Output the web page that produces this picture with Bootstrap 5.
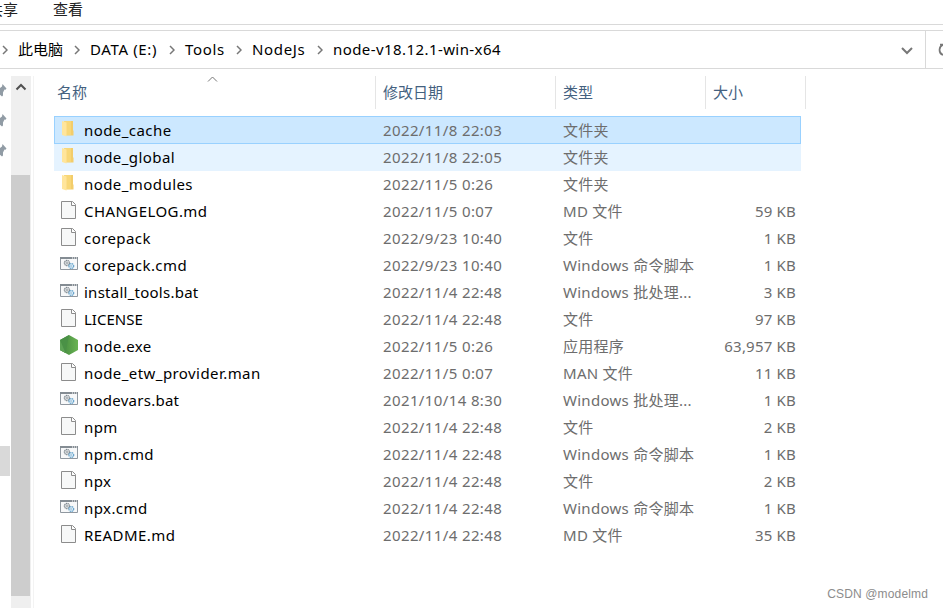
<!DOCTYPE html>
<html lang="zh-CN">
<head>
<meta charset="utf-8">
<title>node-v18.12.1-win-x64</title>
<link href="https://cdn.jsdelivr.net/npm/bootstrap@5.3.0/dist/css/bootstrap.min.css" rel="stylesheet">
<style>
body{width:943px;height:608px;font-family:"Noto Sans","Noto Sans CJK SC",sans-serif;font-size:15px;line-height:27px;color:#000;background:#fff}
svg{display:block;flex:none}
.ribbon{height:25px;border-bottom:1px solid #d9d9d9;color:#222}
.ribbon span{line-height:18px;white-space:nowrap}
.tab-share{width:53px;text-indent:-12px}
.address{height:39px;margin-top:5px;border:1px solid #d9d9d9;border-width:1px 0}
.crumb{white-space:nowrap;line-height:37px;margin-left:10px;letter-spacing:.65px}
.crumb-pc{width:56px;letter-spacing:0}.crumb-drive{width:79px}.crumb-tools{width:51px}.crumb-js{width:65px}
.crumb-last{letter-spacing:.42px}
.sep{width:6px;height:10px}
.sep-first{margin-left:2px}
.chevron{margin-right:10px}
.refresh{width:18px;padding-left:12px;border-left:1px solid #d9d9d9}
.main{height:532px;margin-top:7px}
.pins{width:11px;padding-top:8px}
.pins svg{width:7px;height:14px;margin-bottom:16px}
.pins-mark{width:10px;height:30px;background:#d9d9d9;margin-top:288px}
.track{width:20px;background:#efefef}
.track-arrow{margin-bottom:81px}
.thumb{width:19px;height:421px;background:#cdcdcd}
.divider{width:3px;border-right:1px solid #f3f3f3}
.files{width:752px;margin-left:20px}
.heads{height:33px;color:#44617f;margin-bottom:8px}
.heads>div{border-right:1px solid #e5e5e5;padding-left:7px;line-height:33px;flex:none}
.heads .c-name{padding-left:3px}
.sort{left:153px;top:0}
.c-name{width:322px}.c-date{width:180px}.c-type{width:150px}.c-size{width:100px}
.entry{width:747px;height:27px;color:#6d6d6d;white-space:nowrap}
.entry .c-name{color:#000;padding-left:5px;letter-spacing:.43px}
.entry .c-name.caps{letter-spacing:0}
.entry .c-name.thin{letter-spacing:.25px}
.entry .c-date,.entry .c-type{padding-left:7px}
.entry .c-date{letter-spacing:.38px}
.entry .c-type{letter-spacing:.27px}
.entry .c-size{width:90px;text-align:right;letter-spacing:.2px}
.ico{width:20px;height:20px;margin:2px 5px 0 0}
.picked{width:745px;background:#cce8ff;outline:1px solid #99d1ff;height:26px;margin:0 1px 1px}
.picked .c-name{margin-left:-1px}
.hovered{background:#e5f3ff}
.credit{right:15px;bottom:6px;font:12px/16px "Liberation Sans",sans-serif;letter-spacing:.15px;color:#8c8c8c}
</style>
<script src="https://cdn.jsdelivr.net/npm/bootstrap@5.3.0/dist/js/bootstrap.bundle.min.js"></script>
</head>
<body class="overflow-hidden position-relative">
<svg width="0" height="0" class="position-absolute">
<defs>
<linearGradient id="leaf"><stop offset="0" stop-color="#3f853c"/><stop offset="1" stop-color="#6ab353"/></linearGradient>
<symbol id="folder" viewBox="0 0 20 20"><path d="M6 2h8v9l.500 1v4.500H6z" fill="#f3cd6b"/><path d="M5 2h7v14H5z" fill="#f8d778"/><path d="M3 2l4.500 1.500V17.500L3 16z" fill="#ffe59c"/></symbol>
<symbol id="doc" viewBox="0 0 20 20"><path d="M2.500 1.500h11l3 3v14h-14z" fill="#f7f8f8" stroke="#8c8c8c"/><path d="M12.500 1.500v4h4" fill="#fff" stroke="#8c8c8c"/></symbol>
<symbol id="script" viewBox="0 0 20 20"><path d="M1.500 3.500h17v12h-17z" fill="#f7f8f9" stroke="#9098a0"/><path d="M1 3h18v2H1z" fill="#848c93"/><path d="M13 4h1m1 0h1m1 0h1" stroke="#fff"/><circle cx="8" cy="9" r="2.600" fill="#e6e9eb" stroke="#7f888f" stroke-width="1.200" stroke-dasharray="1.300 .5"/><circle cx="8" cy="9" r="1" fill="#fff" stroke="#7e878e" stroke-width=".7"/><circle cx="12.300" cy="12" r="2.400" fill="#e6f3fb" stroke="#62a0ca" stroke-width="1.200" stroke-dasharray="1.300 .5"/><circle cx="12.300" cy="12" r=".8" fill="#fff" stroke="#78a9c9" stroke-width=".6"/></symbol>
<symbol id="node" viewBox="0 0 20 20"><path d="M10 0l9 5v10l-9 5-9-5V5z" fill="url(#leaf)"/><path d="M10 0L1 5v10l5.500 3z" fill="#4a9146"/><path d="M1 5l5.500 13L1 15z" fill="#5ea356"/></symbol>
<symbol id="gt" viewBox="0 0 6 10"><path d="M1 1l4 4-4 4" fill="none" stroke="#777" stroke-width="1.500"/></symbol>
<symbol id="pin" viewBox="0 0 7 14"><path d="M2.500 0L6.500 4.500 5.500 5.800 4.500 5.500 3 8.500v3l-1 1L-2 9V5.500l4-3z" fill="#919ca5"/></symbol>
</defs>
</svg>

<header class="ribbon d-flex"><span class="tab-share">共享</span><span>查看</span></header>

<nav class="address d-flex" aria-label="path">
<div class="d-flex align-items-center flex-grow-1">
<svg class="sep sep-first"><use href="#gt"/></svg><span class="crumb crumb-pc">此电脑</span>
<svg class="sep"><use href="#gt"/></svg><span class="crumb crumb-drive">DATA (E:)</span>
<svg class="sep"><use href="#gt"/></svg><span class="crumb crumb-tools">Tools</span>
<svg class="sep"><use href="#gt"/></svg><span class="crumb crumb-js">NodeJs</span>
<svg class="sep"><use href="#gt"/></svg><span class="crumb crumb-last">node-v18.12.1-win-x64</span>
<svg class="ms-auto chevron" width="16" height="10"><path d="M3 3l5 5 5-5" fill="none" stroke="#777" stroke-width="2"/></svg>
</div>
<div class="refresh d-flex align-items-center overflow-hidden"><svg width="14" height="14"><path d="M6 1.500A5.500 5.500 0 0 0 5 12M2 1.500h4v4" fill="none" stroke="#777" stroke-width="1.700"/></svg></div>
</nav>

<main class="main d-flex">
<aside class="pins">
<svg><use href="#pin"/></svg><svg><use href="#pin"/></svg><svg><use href="#pin"/></svg>
<div class="pins-mark"></div>
</aside>
<div class="track"><svg class="track-arrow" width="20" height="18"><path d="M5.500 13.500l4.500-4.500 4.500 4.500" fill="none" stroke="#505050" stroke-width="2"/></svg><div class="thumb"></div></div>
<div class="divider"></div>
<section class="files">
<div class="heads d-flex">
<div class="c-name position-relative">名称<svg class="position-absolute sort" width="11" height="7"><path d="M1 5.500l4.500-4.500L10 5.500" fill="none" stroke="#777"/></svg></div>
<div class="c-date">修改日期</div><div class="c-type">类型</div><div class="c-size">大小</div>
</div>
<div class="entry d-flex picked"><div class="c-name d-flex"><svg class="ico"><use href="#folder"/></svg>node_cache</div><div class="c-date">2022/11/8 22:03</div><div class="c-type">文件夹</div><div class="c-size"></div></div>
<div class="entry d-flex hovered"><div class="c-name d-flex"><svg class="ico"><use href="#folder"/></svg>node_global</div><div class="c-date">2022/11/8 22:05</div><div class="c-type">文件夹</div><div class="c-size"></div></div>
<div class="entry d-flex"><div class="c-name d-flex"><svg class="ico"><use href="#folder"/></svg>node_modules</div><div class="c-date">2022/11/5 0:26</div><div class="c-type">文件夹</div><div class="c-size"></div></div>
<div class="entry d-flex"><div class="c-name d-flex"><svg class="ico"><use href="#doc"/></svg>CHANGELOG.md</div><div class="c-date">2022/11/5 0:07</div><div class="c-type">MD 文件</div><div class="c-size">59 KB</div></div>
<div class="entry d-flex"><div class="c-name d-flex"><svg class="ico"><use href="#doc"/></svg>corepack</div><div class="c-date">2022/9/23 10:40</div><div class="c-type">文件</div><div class="c-size">1 KB</div></div>
<div class="entry d-flex"><div class="c-name d-flex"><svg class="ico"><use href="#script"/></svg>corepack.cmd</div><div class="c-date">2022/9/23 10:40</div><div class="c-type">Windows 命令脚本</div><div class="c-size">1 KB</div></div>
<div class="entry d-flex"><div class="c-name thin d-flex"><svg class="ico"><use href="#script"/></svg>install_tools.bat</div><div class="c-date">2022/11/4 22:48</div><div class="c-type">Windows 批处理...</div><div class="c-size">3 KB</div></div>
<div class="entry d-flex"><div class="c-name caps d-flex"><svg class="ico"><use href="#doc"/></svg>LICENSE</div><div class="c-date">2022/11/4 22:48</div><div class="c-type">文件</div><div class="c-size">97 KB</div></div>
<div class="entry d-flex"><div class="c-name d-flex"><svg class="ico"><use href="#node"/></svg>node.exe</div><div class="c-date">2022/11/5 0:26</div><div class="c-type">应用程序</div><div class="c-size">63,957 KB</div></div>
<div class="entry d-flex"><div class="c-name d-flex"><svg class="ico"><use href="#doc"/></svg>node_etw_provider.man</div><div class="c-date">2022/11/5 0:07</div><div class="c-type">MAN 文件</div><div class="c-size">11 KB</div></div>
<div class="entry d-flex"><div class="c-name thin d-flex"><svg class="ico"><use href="#script"/></svg>nodevars.bat</div><div class="c-date">2021/10/14 8:30</div><div class="c-type">Windows 批处理...</div><div class="c-size">1 KB</div></div>
<div class="entry d-flex"><div class="c-name d-flex"><svg class="ico"><use href="#doc"/></svg>npm</div><div class="c-date">2022/11/4 22:48</div><div class="c-type">文件</div><div class="c-size">2 KB</div></div>
<div class="entry d-flex"><div class="c-name d-flex"><svg class="ico"><use href="#script"/></svg>npm.cmd</div><div class="c-date">2022/11/4 22:48</div><div class="c-type">Windows 命令脚本</div><div class="c-size">1 KB</div></div>
<div class="entry d-flex"><div class="c-name d-flex"><svg class="ico"><use href="#doc"/></svg>npx</div><div class="c-date">2022/11/4 22:48</div><div class="c-type">文件</div><div class="c-size">2 KB</div></div>
<div class="entry d-flex"><div class="c-name d-flex"><svg class="ico"><use href="#script"/></svg>npx.cmd</div><div class="c-date">2022/11/4 22:48</div><div class="c-type">Windows 命令脚本</div><div class="c-size">1 KB</div></div>
<div class="entry d-flex"><div class="c-name d-flex"><svg class="ico"><use href="#doc"/></svg>README.md</div><div class="c-date">2022/11/4 22:48</div><div class="c-type">MD 文件</div><div class="c-size">35 KB</div></div>
</section>
</main>
<div class="credit position-absolute">CSDN @modelmd</div>
</body>
</html>
